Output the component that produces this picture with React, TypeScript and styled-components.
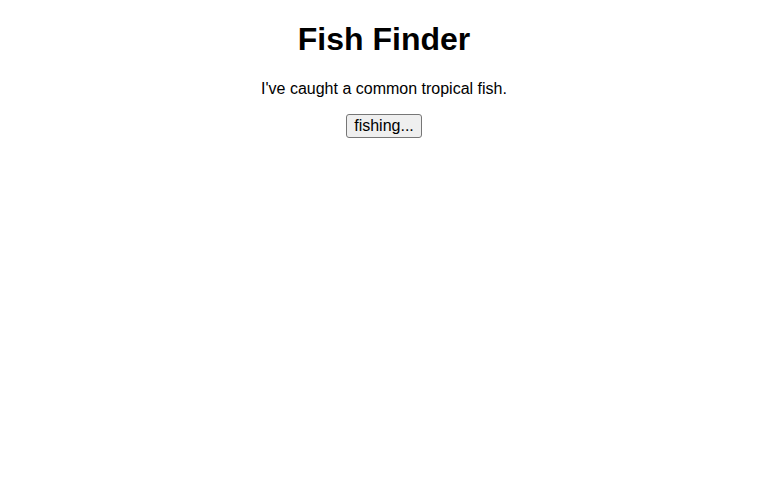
import React, { useState } from 'react';
import styled, { createGlobalStyle } from 'styled-components';

const GlobalStyle = createGlobalStyle`
  body {
    margin: 0 8px;
    font-family: 'Liberation Sans', Arial, sans-serif;
    background: #fff;
    color: #000;
  }
`;

const Page = styled.div`
  text-align: center;
`;

const Title = styled.h1`
  font-size: 32px;
  font-weight: bold;
  margin: 21.44px 0;
`;

const Catch = styled.p`
  font-size: 16px;
  margin: 16px 0;
`;

const FishButton = styled.button`
  font-family: 'Liberation Sans', Arial, sans-serif;
  font-size: 16px;
  color: #000;
  background-color: #efefef;
  border: 1px solid #767676;
  border-radius: 3px;
  padding: 2px 7px;
  cursor: pointer;

  :hover {
    background-color: #e5e5e5;
  }
`;

export default function App() {
  const [fish] = useState('a common tropical fish');

  return (
    <Page>
      <GlobalStyle />
      <Title>Fish Finder</Title>
      <Catch>I've caught {fish}.</Catch>
      <FishButton>fishing...</FishButton>
    </Page>
  );
}
